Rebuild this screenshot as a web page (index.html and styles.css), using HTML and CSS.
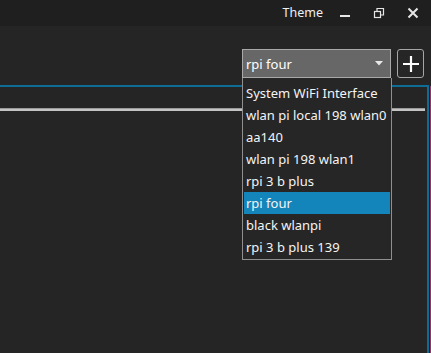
FILE: index.html
```html
<!DOCTYPE html>
<html>
<head>
<meta charset="utf-8">
<link rel="stylesheet" href="styles.css">
</head>
<body>
<div class="window">
  <header class="titlebar">
    <span class="title-text">Theme</span>
    <button class="tb-btn">
      <svg width="12" height="12" viewBox="0 0 12 12"><rect x="1" y="8" width="10" height="2" fill="#e6e6e6"/></svg>
    </button>
    <button class="tb-btn">
      <svg width="12" height="12" viewBox="0 0 12 12" fill="none" stroke="#e6e6e6" stroke-width="1.2"><rect x="1.5" y="4.5" width="6" height="6"/><path d="M4 4.5V1.5h6.5V8H7.5"/></svg>
    </button>
    <button class="tb-btn">
      <svg width="12" height="12" viewBox="0 0 12 12" stroke="#e6e6e6" stroke-width="2"><path d="M1.5 1.5l9 9M10.5 1.5l-9 9"/></svg>
    </button>
  </header>
  <div class="toolbar">
    <div class="combo">
      <span class="combo-text">rpi four</span>
      <svg class="combo-arrow" width="8" height="5" viewBox="0 0 8 5"><path d="M0 0h8L4 4.5z" fill="#e8e8e8"/></svg>
    </div>
    <button class="add-btn">
      <svg width="18" height="18" viewBox="0 0 18 18" stroke="#ffffff" stroke-width="2.2"><path d="M9 1v16M1 9h16"/></svg>
    </button>
  </div>
  <div class="panel">
    <div class="panel-head"></div>
    <div class="panel-rule"></div>
  </div>
  <ul class="dropdown">
    <li>System WiFi Interface</li>
    <li>wlan pi local 198 wlan0</li>
    <li>aa140</li>
    <li>wlan pi 198 wlan1</li>
    <li>rpi 3 b plus</li>
    <li class="selected">rpi four</li>
    <li>black wlanpi</li>
    <li>rpi 3 b plus 139</li>
  </ul>
  <div class="edge"></div>
</div>
</body>
</html>
```

FILE: styles.css
```css
html, body {
  margin: 0;
  padding: 0;
  background: #252525;
  font-family: "Noto Sans", "Open Sans", sans-serif;
  font-size: 13px;
  color: #f2f2f2;
  overflow: hidden;
}

.window {
  position: relative;
  width: 431px;
  height: 353px;
  display: flex;
  flex-direction: column;
}

.titlebar {
  height: 26px;
  background: #1f1f1f;
  display: flex;
  align-items: center;
  justify-content: flex-end;
  padding-right: 1px;
  box-sizing: border-box;
}

.title-text {
  font-size: 12.5px;
  color: #f0f0f0;
  margin-right: 5px;
  line-height: 26px;
}

.tb-btn {
  background: none;
  border: none;
  padding: 0;
  width: 34px;
  height: 26px;
  display: flex;
  align-items: center;
  justify-content: center;
}

.toolbar {
  display: flex;
  padding: 23px 0 0 242px;
  gap: 6px;
  height: 29px;
}

.combo {
  width: 149px;
  height: 29px;
  box-sizing: border-box;
  background: #676767;
  border: 1px solid #a9a9a9;
  display: flex;
  align-items: center;
  justify-content: space-between;
  padding: 0 7px 0 3px;
}

.combo-text {
  color: #ffffff;
  font-size: 13px;
}

.add-btn {
  width: 27px;
  height: 29px;
  box-sizing: border-box;
  border: 1px solid #a6a6a6;
  border-radius: 3px;
  background: #262626;
  padding: 0;
  display: flex;
  align-items: center;
  justify-content: center;
}

.panel {
  margin-top: 7px;
  width: 429px;
  flex: 1;
  box-sizing: border-box;
  border-top: 2px solid #0f6c95;
  border-right: 2px solid #0f6c95;
}

.panel-head {
  height: 21px;
}

.panel-rule {
  height: 3px;
  width: 425px;
  background: #c4c4c4;
  border-top: 1px solid #9a9a9a;
  box-sizing: border-box;
}

.dropdown {
  position: absolute;
  left: 242px;
  top: 78px;
  width: 150px;
  margin: 0;
  padding: 4px 1px 1px 1px;
  box-sizing: border-box;
  list-style: none;
  background: #262626;
  border: 1px solid #8f8f8f;
  border-top: none;
}

.dropdown li {
  height: 22px;
  line-height: 22px;
  padding: 0 3px 0 2px;
  white-space: nowrap;
  overflow: hidden;
  text-overflow: clip;
  color: #f4f4f4;
}

.dropdown li.selected {
  background: #1485ba;
}

.edge {
  position: absolute;
  right: 0;
  top: 86px;
  bottom: 0;
  width: 1px;
  background: #a3305c;
}
```
